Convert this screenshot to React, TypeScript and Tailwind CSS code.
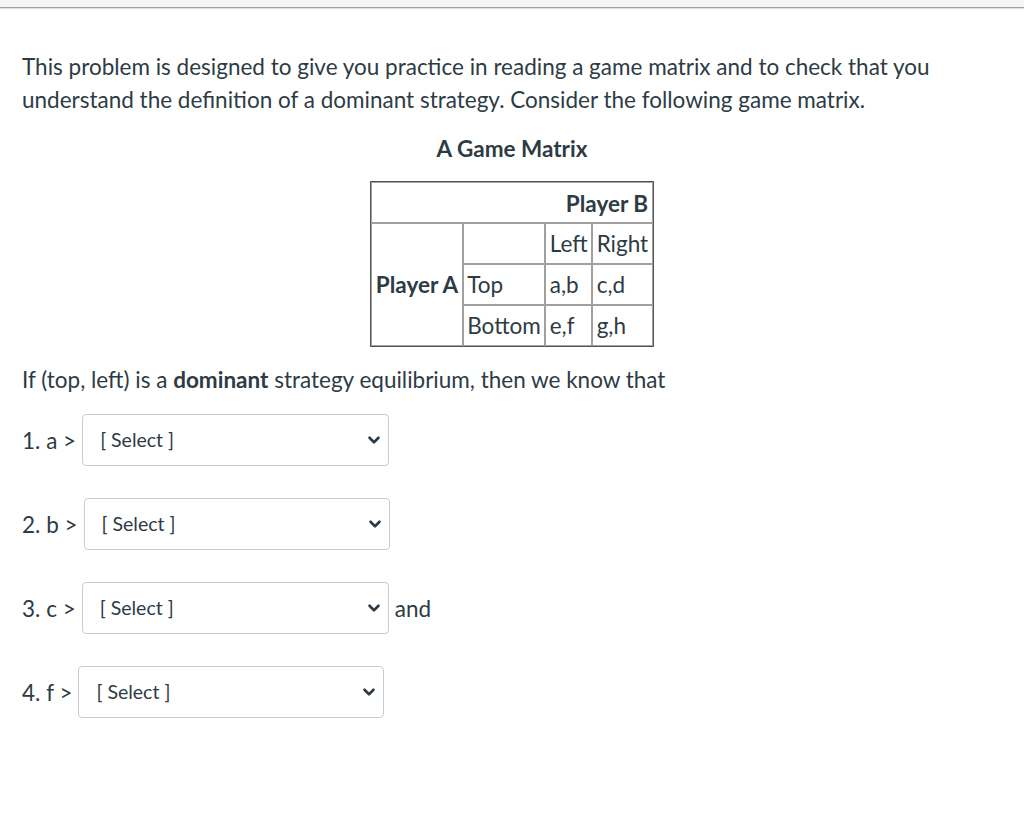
import { ChevronDown } from 'lucide-react'

const rows = [
  { n: '1.', v: 'a', w: 'w-[307px]' },
  { n: '2.', v: 'b', w: 'w-[306px]' },
  { n: '3.', v: 'c', w: 'w-[307px]', after: 'and' },
  { n: '4.', v: 'f', w: 'w-[306px]' },
]

function SelectBox({ w }: { w: string }) {
  return (
    <div className={`${w} h-[52px] border border-[#c7cdd1] rounded-[4px] bg-white flex items-center justify-between pl-[17px] pr-[5px]`}>
      <span className="text-[19.5px] text-[#2d3b45] -mt-[2px]">[ Select ]</span>
      <ChevronDown size={18} strokeWidth={3.5} className="text-[#2d3b45]" />
    </div>
  )
}

const cell = 'border border-[#a0a0a0] px-[3.5px]'

export default function App() {
  return (
    <div className="w-[1024px] h-[831px] bg-white text-[#2d3b45] font-['Lato',sans-serif]">
      <div className="h-[7px] bg-[#f5f5f5]" />
      <div className="h-px bg-[#a0a0a0]" />
      <div className="h-px bg-[#e0e0e0]" />

      <div className="px-[22px] pt-[41px] text-[22.5px] leading-[33px]">
        <p>
          This problem is designed to give you practice in reading a game matrix and to check that you
          understand the definition of a dominant strategy. Consider the following game matrix.
        </p>

        <table className="mx-auto mt-[16px] border-separate border-spacing-0 border border-[#555]">
          <caption className="font-bold pb-[16px]">A Game Matrix</caption>
          <tbody>
            <tr>
              <td colSpan={4} className={`${cell} h-[41px] text-right font-bold pt-[2px]`}>
                Player B
              </td>
            </tr>
            <tr>
              <td rowSpan={3} className={`${cell} font-bold`}>Player A</td>
              <td className={`${cell} h-[41px]`}></td>
              <td className={cell}>Left</td>
              <td className={cell}>Right</td>
            </tr>
            <tr>
              <td className={`${cell} h-[41px]`}>Top</td>
              <td className={cell}>a,b</td>
              <td className={cell}>c,d</td>
            </tr>
            <tr>
              <td className={`${cell} h-[41px]`}>Bottom</td>
              <td className={cell}>e,f</td>
              <td className={cell}>g,h</td>
            </tr>
          </tbody>
        </table>

        <p className="mt-[16px]">
          If (top, left) is a <strong>dominant</strong> strategy equilibrium, then we know that
        </p>

        <div className="mt-[18px] flex flex-col gap-[32px]">
          {rows.map(r => (
            <div key={r.n} className="flex items-center">
              <span>{r.n} {r.v} &gt;</span>
              <div className="ml-[6px]">
                <SelectBox w={r.w} />
              </div>
              {r.after && <span className="ml-[6px]">{r.after}</span>}
            </div>
          ))}
        </div>
      </div>
    </div>
  )
}
